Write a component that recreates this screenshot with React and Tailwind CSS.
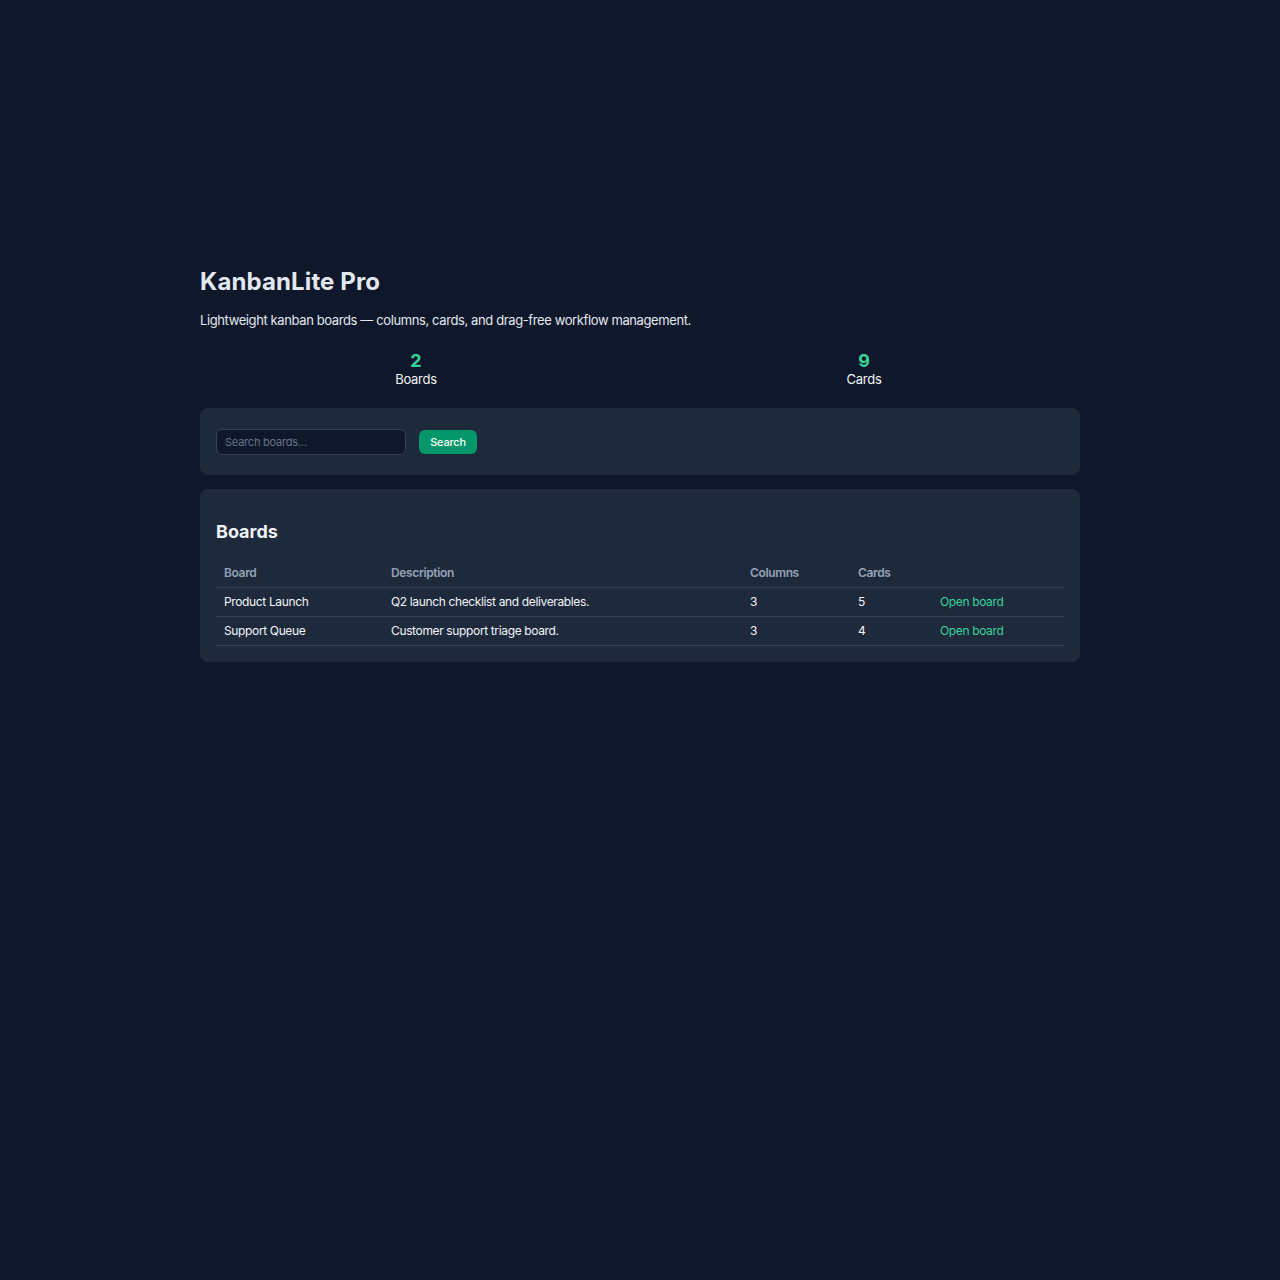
const boards = [
  { id: 1, name: "Product Launch", description: "Q2 launch checklist and deliverables.", columns: 3, cards: 5 },
  { id: 2, name: "Support Queue", description: "Customer support triage board.", columns: 3, cards: 4 },
];

export default function App() {
  const totalCards = boards.reduce((sum, b) => sum + b.cards, 0);

  return (
    <div className="min-h-screen bg-[#0f172a] text-[#e2e8f0] font-['Inter',sans-serif]">
      <div className="w-[880px] mx-auto pt-[266px]">
        {/* Header */}
        <h1 className="text-[24px] leading-[32px] font-bold text-[#e2e8f0] tracking-[0.005em]">KanbanLite Pro</h1>
        <p className="mt-[12px] text-[13px] leading-[20px] text-[#e2e8f0] tracking-[-0.03em]">
          Lightweight kanban boards — columns, cards, and drag-free workflow management.
        </p>

        {/* Stats */}
        <div className="grid grid-cols-2 gap-4 mt-[21px] text-center">
          <div>
            <div className="text-[18px] leading-[20px] font-bold text-[#34d399]">{boards.length}</div>
            <div className="text-[13px] leading-[16px] text-[#f1f5f9] tracking-[-0.02em]">Boards</div>
          </div>
          <div>
            <div className="text-[18px] leading-[20px] font-bold text-[#34d399]">{totalCards}</div>
            <div className="text-[13px] leading-[16px] text-[#f1f5f9] tracking-[-0.02em]">Cards</div>
          </div>
        </div>

        {/* Search */}
        <div className="mt-[21px] bg-[#1e293b] rounded-lg px-4 pt-[21px] pb-[20px]">
          <form className="flex items-center" onSubmit={(e) => e.preventDefault()}>
            <input
              type="text"
              placeholder="Search boards…"
              className="w-[190px] h-[26px] px-2 rounded-md bg-[#0f172a] border border-[#334155] text-[11px] tracking-[-0.02em] text-[#e2e8f0] placeholder-[#64748b] outline-none"
            />
            <button className="ml-[13px] w-[58px] h-[24px] rounded-md bg-[#059669] text-white text-[11px] font-medium tracking-[-0.02em]">
              Search
            </button>
          </form>
        </div>

        {/* Boards table */}
        <div className="mt-[14px] bg-[#1e293b] rounded-lg px-4 pt-[30px] pb-4">
          <h2 className="text-[18px] leading-[26px] font-bold text-[#f1f5f9]">Boards</h2>
          <table className="w-full mt-[14px] text-[12px] leading-[16px] tracking-[-0.03em] border-collapse table-fixed">
            <thead>
              <tr className="border-b border-[#334155] text-left text-[#94a3b8]">
                <th className="w-[167px] px-2 py-[6px] font-semibold">Board</th>
                <th className="w-[359px] px-2 py-[6px] font-semibold">Description</th>
                <th className="w-[108px] px-2 py-[6px] font-semibold">Columns</th>
                <th className="w-[82px] px-2 py-[6px] font-semibold">Cards</th>
                <th className="px-2 py-[6px]"></th>
              </tr>
            </thead>
            <tbody>
              {boards.map((board) => (
                <tr key={board.id} className="border-b border-[#334155] text-[#f1f5f9]">
                  <td className="px-2 py-[6px]">{board.name}</td>
                  <td className="px-2 py-[6px]">{board.description}</td>
                  <td className="px-2 py-[6px]">{board.columns}</td>
                  <td className="px-2 py-[6px]">{board.cards}</td>
                  <td className="px-2 py-[6px]">
                    <a href="#" className="text-[#34d399]">Open board</a>
                  </td>
                </tr>
              ))}
            </tbody>
          </table>
        </div>
      </div>
    </div>
  );
}
